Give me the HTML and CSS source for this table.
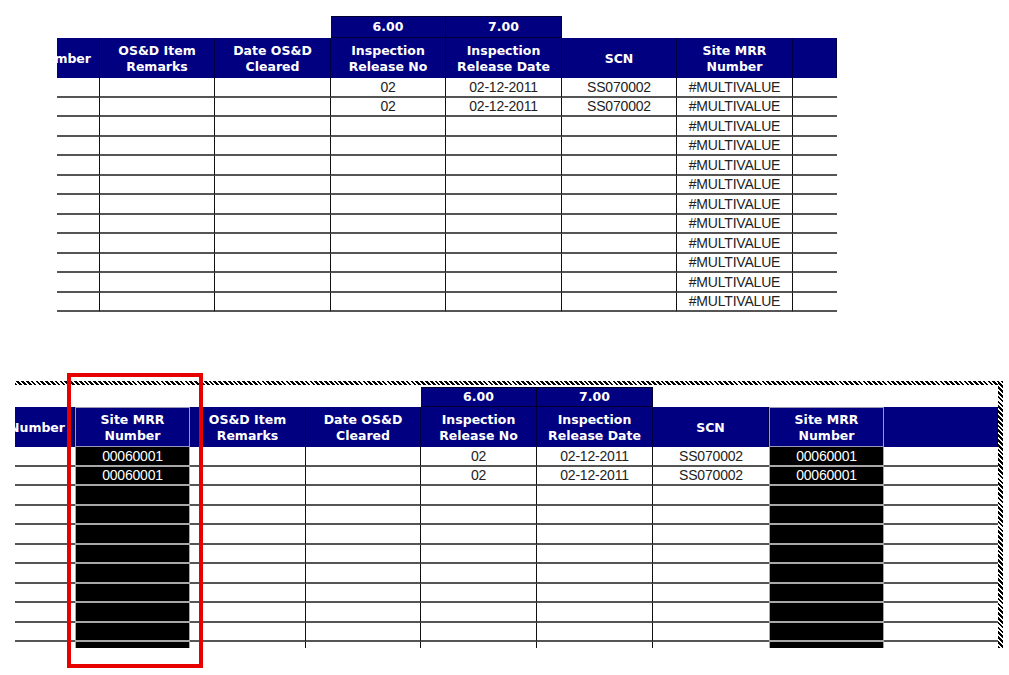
FILE: index.html
```html
<!DOCTYPE html>
<html>
<head>
<meta charset="utf-8">
<link rel="stylesheet" href="styles.css">
</head>
<body>
<div class="sheet">
  <div class="grid grid-top">
    <div class="blank span3"></div>
    <div class="band">6.00</div>
    <div class="band">7.00</div>
    <div class="blank span3"></div>

    <div class="hd clip"><span>Number</span></div>
    <div class="hd">OS&amp;D Item<br>Remarks</div>
    <div class="hd">Date OS&amp;D<br>Cleared</div>
    <div class="hd">Inspection<br>Release No</div>
    <div class="hd">Inspection<br>Release Date</div>
    <div class="hd">SCN</div>
    <div class="hd">Site MRR<br>Number</div>
    <div class="hd"></div>

    <div class="c vl"></div><div class="c vl"></div><div class="c vl"></div><div class="c vl">02</div><div class="c vl">02-12-2011</div><div class="c vl">SS070002</div><div class="c vl">#MULTIVALUE</div><div class="c"></div>
    <div class="c vl"></div><div class="c vl"></div><div class="c vl"></div><div class="c vl">02</div><div class="c vl">02-12-2011</div><div class="c vl">SS070002</div><div class="c vl">#MULTIVALUE</div><div class="c"></div>
    <div class="c vl"></div><div class="c vl"></div><div class="c vl"></div><div class="c vl"></div><div class="c vl"></div><div class="c vl"></div><div class="c vl">#MULTIVALUE</div><div class="c"></div>
    <div class="c vl"></div><div class="c vl"></div><div class="c vl"></div><div class="c vl"></div><div class="c vl"></div><div class="c vl"></div><div class="c vl">#MULTIVALUE</div><div class="c"></div>
    <div class="c vl"></div><div class="c vl"></div><div class="c vl"></div><div class="c vl"></div><div class="c vl"></div><div class="c vl"></div><div class="c vl">#MULTIVALUE</div><div class="c"></div>
    <div class="c vl"></div><div class="c vl"></div><div class="c vl"></div><div class="c vl"></div><div class="c vl"></div><div class="c vl"></div><div class="c vl">#MULTIVALUE</div><div class="c"></div>
    <div class="c vl"></div><div class="c vl"></div><div class="c vl"></div><div class="c vl"></div><div class="c vl"></div><div class="c vl"></div><div class="c vl">#MULTIVALUE</div><div class="c"></div>
    <div class="c vl"></div><div class="c vl"></div><div class="c vl"></div><div class="c vl"></div><div class="c vl"></div><div class="c vl"></div><div class="c vl">#MULTIVALUE</div><div class="c"></div>
    <div class="c vl"></div><div class="c vl"></div><div class="c vl"></div><div class="c vl"></div><div class="c vl"></div><div class="c vl"></div><div class="c vl">#MULTIVALUE</div><div class="c"></div>
    <div class="c vl"></div><div class="c vl"></div><div class="c vl"></div><div class="c vl"></div><div class="c vl"></div><div class="c vl"></div><div class="c vl">#MULTIVALUE</div><div class="c"></div>
    <div class="c vl"></div><div class="c vl"></div><div class="c vl"></div><div class="c vl"></div><div class="c vl"></div><div class="c vl"></div><div class="c vl">#MULTIVALUE</div><div class="c"></div>
    <div class="c vl"></div><div class="c vl"></div><div class="c vl"></div><div class="c vl"></div><div class="c vl"></div><div class="c vl"></div><div class="c vl">#MULTIVALUE</div><div class="c"></div>
  </div>

  <div class="frame">
    <div class="hatch-top"></div>
    <div class="view">
      <div class="grid grid-bot">
        <div class="blank span4"></div>
        <div class="band">6.00</div>
        <div class="band">7.00</div>
        <div class="blank span3"></div>

        <div class="hd clip clip2"><span>Number</span></div>
        <div class="hd sel">Site MRR<br>Number</div>
        <div class="hd">OS&amp;D Item<br>Remarks</div>
        <div class="hd">Date OS&amp;D<br>Cleared</div>
        <div class="hd">Inspection<br>Release No</div>
        <div class="hd">Inspection<br>Release Date</div>
        <div class="hd">SCN</div>
        <div class="hd sel">Site MRR<br>Number</div>
        <div class="hd"></div>

        <div class="c"></div><div class="c blk">00060001</div><div class="c vl"></div><div class="c vl"></div><div class="c vl">02</div><div class="c vl">02-12-2011</div><div class="c">SS070002</div><div class="c blk">00060001</div><div class="c"></div>
        <div class="c"></div><div class="c blk">00060001</div><div class="c vl"></div><div class="c vl"></div><div class="c vl">02</div><div class="c vl">02-12-2011</div><div class="c">SS070002</div><div class="c blk">00060001</div><div class="c"></div>
        <div class="c"></div><div class="c blk"></div><div class="c vl"></div><div class="c vl"></div><div class="c vl"></div><div class="c vl"></div><div class="c"></div><div class="c blk"></div><div class="c"></div>
        <div class="c"></div><div class="c blk"></div><div class="c vl"></div><div class="c vl"></div><div class="c vl"></div><div class="c vl"></div><div class="c"></div><div class="c blk"></div><div class="c"></div>
        <div class="c"></div><div class="c blk"></div><div class="c vl"></div><div class="c vl"></div><div class="c vl"></div><div class="c vl"></div><div class="c"></div><div class="c blk"></div><div class="c"></div>
        <div class="c"></div><div class="c blk"></div><div class="c vl"></div><div class="c vl"></div><div class="c vl"></div><div class="c vl"></div><div class="c"></div><div class="c blk"></div><div class="c"></div>
        <div class="c"></div><div class="c blk"></div><div class="c vl"></div><div class="c vl"></div><div class="c vl"></div><div class="c vl"></div><div class="c"></div><div class="c blk"></div><div class="c"></div>
        <div class="c"></div><div class="c blk"></div><div class="c vl"></div><div class="c vl"></div><div class="c vl"></div><div class="c vl"></div><div class="c"></div><div class="c blk"></div><div class="c"></div>
        <div class="c"></div><div class="c blk"></div><div class="c vl"></div><div class="c vl"></div><div class="c vl"></div><div class="c vl"></div><div class="c"></div><div class="c blk"></div><div class="c"></div>
        <div class="c"></div><div class="c blk"></div><div class="c vl"></div><div class="c vl"></div><div class="c vl"></div><div class="c vl"></div><div class="c"></div><div class="c blk"></div><div class="c"></div>
        <div class="c"></div><div class="c blk"></div><div class="c vl"></div><div class="c vl"></div><div class="c vl"></div><div class="c vl"></div><div class="c"></div><div class="c blk"></div><div class="c"></div>
      </div>
    </div>
    <div class="hatch-right"></div>
  </div>

  <div class="highlight"></div>
</div>
</body>
</html>
```

FILE: styles.css
```css
html, body {
  margin: 0;
  padding: 0;
  background: #fff;
}

.sheet {
  position: relative;
  width: 1009px;
  height: 675px;
  overflow: hidden;
  font-family: "Liberation Sans", Arial, sans-serif;
}

.grid {
  display: grid;
}

.grid-top {
  margin: 16px 0 0 57px;
  grid-template-columns: 43px 115px 116px 115px 116px 115px 116px 44px;
  grid-template-rows: 22px 40px repeat(12, 19.5px);
  width: 780px;
}

.span3 { grid-column: span 3; }
.span4 { grid-column: span 4; }

.band,
.hd {
  background: #000080;
  color: #fff;
  font-family: "DejaVu Sans", Verdana, sans-serif;
  font-weight: bold;
  font-size: 12.5px;
  letter-spacing: 0;
  line-height: 16px;
  text-align: center;
  display: flex;
  align-items: center;
  justify-content: center;
  box-sizing: border-box;
}

.band {
  border: 1px solid #000030;
  border-left-width: 0;
}
.band:first-of-type { border-left-width: 1px; }

.hd {
  border-right: 1px solid #000040;
  padding-top: 1px;
}

.hd.clip {
  justify-content: flex-end;
  overflow: hidden;
  white-space: nowrap;
  padding-right: 8px;
}
.hd.clip2 { padding-right: 9px; }

.hd.sel {
  border: 1px solid #9a9ab8;
}

.c {
  box-sizing: border-box;
  border-bottom: 2px solid #555;
  font-size: 14px;
  letter-spacing: -0.2px;
  color: #222;
  display: flex;
  align-items: center;
  justify-content: center;
  white-space: nowrap;
  overflow: hidden;
}

.c.vl {
  border-right: 1px solid #111;
}

.c.blk {
  background: #000;
  color: #fff;
  border-bottom-color: #a8a8a8;
  border-left: 1px solid #a8a8a8;
  border-right: 1px solid #a8a8a8;
}

/* bottom framed area */
.frame {
  margin: 69px 0 0 15px;
  display: grid;
  grid-template-columns: 983px 5px;
  grid-template-rows: 4px 263px;
  width: 988px;
}

.hatch-top,
.hatch-right {
  background: repeating-linear-gradient(45deg, #000 0 1.9px, #fff 1.9px 3.4px);
}

.hatch-top {
  grid-column: 1;
  grid-row: 1;
}

.hatch-right {
  grid-column: 2;
  grid-row: 1 / span 2;
}

.view {
  grid-column: 1;
  grid-row: 2;
  padding-top: 2px;
  overflow: hidden;
}

.grid-bot {
  grid-template-columns: 60px 115px 116px 115px 116px 116px 116px 115px 114px;
  grid-template-rows: 20px 40px repeat(11, 19.5px);
}

.highlight {
  position: absolute;
  left: 67px;
  top: 373px;
  width: 136px;
  height: 295px;
  box-sizing: border-box;
  border: 4px solid #e60000;
}
```
